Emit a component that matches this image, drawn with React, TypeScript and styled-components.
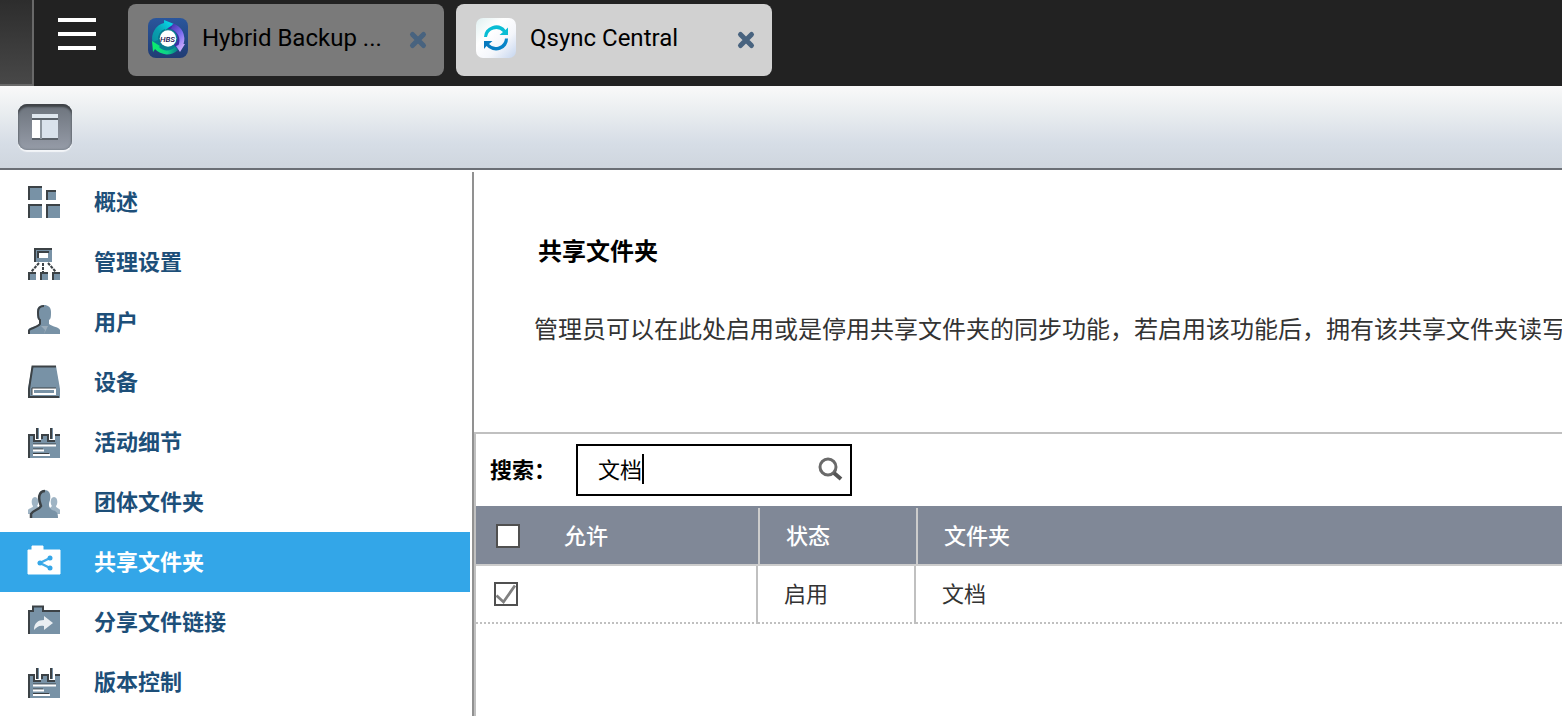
import React, { useState } from "react";
import styled, { createGlobalStyle } from "styled-components";

const GlobalStyle = createGlobalStyle`
  * { box-sizing: border-box; }
  html, body { margin: 0; padding: 0; background: #fff; }
  body, button, input {
    font-family: "Noto Sans CJK SC", "Noto Sans", sans-serif;
  }
`;

const Page = styled.div`
  display: flex;
  flex-direction: column;
  min-height: 100vh;
  overflow: hidden;
`;

const TopBar = styled.header`
  display: flex;
  height: 86px;
  background: #222;
`;

const Corner = styled.div`
  width: 34px;
  border-right: 2px solid #696969;
  border-bottom: 2px solid #696969;
  background: linear-gradient(#2d2d2d, #484848);
`;

const MenuButton = styled.button`
  display: flex;
  flex-direction: column;
  gap: 10px;
  width: 94px;
  padding: 18px 32px 0 24px;
  border: 0;
  background: none;
`;

const MenuLine = styled.span`
  height: 4px;
  background: #fff;
`;

const Tabs = styled.nav`
  display: flex;
  gap: 12px;
  padding: 4px 0 10px;
`;

const Tab = styled.div<{ $active?: boolean }>`
  display: flex;
  align-items: center;
  width: 316px;
  padding: 0 16px 4px 20px;
  border-radius: 8px;
  background: ${(p) => (p.$active ? "#d1d1d1" : "#7a7a7a")};
`;

const TabTitle = styled.a`
  flex: 1;
  margin-left: 14px;
  color: #000;
  font: 400 24px/32px Roboto, sans-serif;
  text-decoration: none;
  white-space: nowrap;
`;

const CloseButton = styled.button`
  display: flex;
  padding: 4px 0 0;
  border: 0;
  background: none;
`;

const Toolbar = styled.div`
  display: flex;
  align-items: flex-start;
  height: 84px;
  padding: 18px;
  border-bottom: 2px solid #6b6f75;
  background: linear-gradient(#f9f9f9 0%, #e8ecef 35%, #d6dde6 70%, #cfd6de 100%);
`;

const LayoutButton = styled.button`
  display: grid;
  place-items: center;
  width: 54px;
  height: 46px;
  padding: 0;
  border: 0;
  border-radius: 9px;
  background: linear-gradient(#6c737c, #969ca8);
  box-shadow: inset 0 3px 2px #3f4347, inset 0 0 2px 1px #7d858f, 0 2px 1px #f3f5f8;
`;

const Body = styled.div`
  display: flex;
  flex: 1;
  padding-top: 2px;
`;

const Sidebar = styled.nav`
  flex: 0 0 474px;
  padding-right: 2px;
  border-right: 2px solid #919191;
`;

const SideItem = styled.a<{ $active?: boolean }>`
  display: flex;
  align-items: center;
  gap: 32px;
  height: 60px;
  padding-left: 26px;
  background: ${(p) => (p.$active ? "#33a6e8" : "transparent")};
  color: ${(p) => (p.$active ? "#fff" : "#1d4f79")};
  font-size: 22px;
  font-weight: 700;
  line-height: 32px;
  text-decoration: none;
`;

const SideLabel = styled.span`
  padding-bottom: 4px;
`;

const Main = styled.main`
  display: flex;
  flex: 1;
  flex-direction: column;
  min-width: 0;
  overflow: hidden;
`;

const Intro = styled.section`
  padding: 62px 0 88px 60px;
`;

const Heading = styled.h1`
  margin: 0 0 46px 4px;
  color: #000;
  font-size: 24px;
  font-weight: 700;
  line-height: 32px;
`;

const Description = styled.p`
  margin: 0;
  color: #333;
  font-size: 24px;
  line-height: 32px;
  white-space: nowrap;
`;

const Panel = styled.section`
  flex: 1;
  border-top: 2px solid #c0c0c0;
  border-left: 2px solid #c0c0c0;
`;

const SearchRow = styled.div`
  display: flex;
  align-items: center;
  gap: 20px;
  height: 72px;
  padding-left: 14px;
`;

const SearchLabel = styled.label`
  padding-bottom: 4px;
  color: #000;
  font-size: 22px;
  font-weight: 700;
  line-height: 32px;
`;

const SearchBox = styled.div`
  position: relative;
  display: flex;
  align-items: center;
  width: 276px;
  height: 52px;
  padding: 0 6px 0 20px;
  border: 2px solid #000;
`;

const SearchInput = styled.input`
  flex: 1;
  min-width: 0;
  height: 40px;
  padding: 0 0 4px;
  border: 0;
  outline: 0;
  background: none;
  color: #000;
  font-size: 22px;
`;

const Caret = styled.span`
  position: absolute;
  top: 8px;
  left: 64px;
  width: 2px;
  height: 30px;
  background: #000;
`;

const SearchButton = styled.button`
  display: flex;
  padding: 0;
  border: 0;
  background: none;
`;

const Table = styled.table`
  width: 100%;
  border-top: 2px solid #808897;
  border-spacing: 0;
  table-layout: fixed;
`;

const HeadCell = styled.th<{ $width?: number }>`
  width: ${(p) => (p.$width ? `${p.$width}px` : "auto")};
  height: 58px;
  padding: 0 0 4px 26px;
  border-bottom: 2px solid #ccc;
  border-left: 2px solid #ccc;
  background: #808897;
  color: #fff;
  font-size: 22px;
  font-weight: 500;
  line-height: 32px;
  text-align: left;

  &:first-child {
    padding-left: 20px;
    border-left: 0;
  }
`;

const Cell = styled.td`
  height: 58px;
  padding: 0 0 4px 26px;
  border-right: 2px solid #c0c0c0;
  border-bottom: 2px dotted #c0c0c0;
  color: #333;
  font-size: 22px;
  line-height: 32px;

  &:first-child { padding-left: 18px; }
  &:last-child { border-right: 0; }
`;

const CheckLabel = styled.label`
  display: flex;
  align-items: center;
  gap: 44px;
`;

const CheckFrame = styled.span`
  display: grid;
  margin-top: 4px;
  width: 24px;
  height: 24px;

  > * { grid-area: 1 / 1; }
`;

const CheckInput = styled.input`
  width: 24px;
  height: 24px;
  margin: 0;
  border: 2px solid #505050;
  appearance: none;
  background: #fff;
`;

const CheckMark = styled.svg`
  pointer-events: none;
`;

function CheckBox(props: { label: string; checked: boolean; onChange: () => void; showLabel?: boolean }) {
  return (
    <CheckLabel>
      <CheckFrame>
        <CheckInput type="checkbox" aria-label={props.label} checked={props.checked} onChange={props.onChange} />
        {props.checked && (
          <CheckMark width="24" height="24" viewBox="0 0 24 24" fill="none">
            <path d="M2.500 13.500L9.500 20L21 3.500" stroke="#808080" strokeWidth="2.800" />
          </CheckMark>
        )}
      </CheckFrame>
      {props.showLabel && <span>{props.label}</span>}
    </CheckLabel>
  );
}

const HbsIcon = () => (
  <svg width="40" height="40" viewBox="0 0 40 40">
    <defs>
      <linearGradient id="hbsBg" x2="0" y2="1"><stop stopColor="#2a569c" /><stop offset="1" stopColor="#203c74" /></linearGradient>
      <linearGradient id="hbsLeft" x1="1" y1="0" x2="0" y2="1"><stop stopColor="#08e5f5" /><stop offset=".6" stopColor="#08a0b0" /><stop offset="1" stopColor="#0890a0" /></linearGradient>
      <linearGradient id="hbsRight" x2=".5" y2="1"><stop stopColor="#4330a8" /><stop offset=".55" stopColor="#7b6cf0" /><stop offset="1" stopColor="#c8a8ff" /></linearGradient>
      <linearGradient id="hbsBottom" x2="1"><stop stopColor="#0af06a" /><stop offset=".6" stopColor="#0fcf8b" /><stop offset="1" stopColor="#08798c" /></linearGradient>
    </defs>
    <rect width="40" height="40" rx="8" fill="url(#hbsBg)" />
    <circle cx="20" cy="20.5" r="11" fill="none" stroke="#087c91" strokeWidth="7" />
    <path d="M20.500 6A14.500 14.500 0 0 1 30 31L26 27A9 9 0 0 0 20 11Z" fill="#3d2ea6" />
    <path d="M4.500 24A16 16 0 0 1 16 5L16 2L26 6L17 12L17 11A10 10 0 0 0 10 22Z" fill="url(#hbsLeft)" />
    <path d="M25 5.500A16 16 0 0 1 35.500 26L37 26L32 34L28 28L30.500 27A12 12 0 0 0 23 11Z" fill="url(#hbsRight)" />
    <path d="M30 32A16 16 0 0 1 7 31L5 34L4 23L12 28L11 29A11 11 0 0 0 27 29Z" fill="url(#hbsBottom)" />
    <circle cx="20" cy="20.500" r="8.300" fill="#fff" />
    <text x="19.500" y="23.500" textAnchor="middle" fontFamily="Roboto, sans-serif" fontSize="8" fontWeight="500" fontStyle="italic" fill="#1c1550">HBS</text>
  </svg>
);

const QsyncIcon = () => (
  <svg width="40" height="40" viewBox="0 0 40 40">
    <defs>
      <linearGradient id="qsBg" x2="1" y2="1"><stop stopColor="#e0f0f1" /><stop offset=".35" stopColor="#fff" /><stop offset=".65" stopColor="#f4f6fb" /><stop offset="1" stopColor="#c5d5ee" /></linearGradient>
      <linearGradient id="qsArc" x2="1"><stop stopColor="#0678bd" /><stop offset="1" stopColor="#0786ca" /></linearGradient>
    </defs>
    <rect width="40" height="40" rx="7" fill="url(#qsBg)" />
    <path d="M8 19A12 11.500 0 0 1 29.500 12L32 9.500V17H23.500L27 14A9.300 9.300 0 0 0 11 19Z" fill="#09bdd4" />
    <path d="M32 20.500A12 11.500 0 0 1 10.500 28L8 31V23H16.500L13 26A9.300 9.300 0 0 0 29 20.500Z" fill="url(#qsArc)" />
  </svg>
);

const CloseIcon = () => (
  <svg width="20" height="20" viewBox="0 0 20 20" fill="none">
    <path d="M4.500 4.500L15.500 15.500M15.500 4.500L4.500 15.500" stroke="#48637f" strokeWidth="5" strokeLinecap="round" />
  </svg>
);

const LayoutIcon = () => (
  <svg width="28" height="28" viewBox="0 0 28 28">
    <path d="M1 5H27V7H1ZM1 25H27V27H1Z" fill="#5c636b" />
    <path d="M9 7H11V26H9Z" fill="#8b949d" />
    <path d="M1 1H27V5H1Z" fill="#dfe7ef" />
    <path d="M1 7H9V25H1Z" fill="#fff" />
    <path d="M11 7H27V25H11Z" fill="#d9e2ec" />
  </svg>
);

const SearchIcon = () => (
  <svg width="26" height="26" viewBox="0 0 26 26" fill="none">
    <circle cx="10" cy="10" r="8" stroke="#6a6a6a" strokeWidth="3" />
    <path d="M16 16L23 22" stroke="#555" strokeWidth="4" />
  </svg>
);

const FILL = "#7892a6";
const EDGE = "#3c4246";

const IconBase = (props: { children: React.ReactNode }) => (
  <svg width="36" height="36" viewBox="0 0 36 36" fill="none" aria-hidden="true">
    {props.children}
  </svg>
);

const Block = ({ x, y, w, h }: { x: number; y: number; w: number; h: number }) => (
  <>
    <rect x={x} y={y} width={w} height={h} fill={FILL} />
    <path d={`M${x + 1} ${y + h}V${y + 1}H${x + w}`} stroke={EDGE} strokeWidth="2" />
  </>
);

const OverviewIcon = () => (
  <IconBase>
    <Block x={2} y={2} w={14} h={14} />
    <Block x={20} y={6} w={10} h={10} />
    <Block x={2} y={20} w={14} h={14} />
    <Block x={20} y={20} w={14} h={14} />
  </IconBase>
);

const SettingsIcon = () => (
  <IconBase>
    <path d="M10 6H24V16H10Z" stroke={FILL} strokeWidth="4" />
    <path d="M9 18V5H26M12 14V8H23" stroke={EDGE} strokeWidth="2" />
    <path d="M13 19L5 28M17 19V28M22 19L30 28" stroke={EDGE} strokeWidth="2" strokeDasharray="3 1" />
    <Block x={2} y={28} w={8} h={8} />
    <Block x={14} y={28} w={8} h={8} />
    <Block x={26} y={28} w={8} h={8} />
  </IconBase>
);

const UserIcon = () => (
  <IconBase>
    <path d="M2 30V26C3 23 10 23 13 20V16C11 15 11 12 11 8C11 3 14 1 18 1C22 1 25 3 25 8C25 12 25 15 23 16V20C27 23 33 23 34 26V30Z" fill={FILL} />
    <path d="M3 30V26.500C4 24 11 24 14 20V16C12 15 12 12 12 8C12 4 14 2 18 2" stroke={EDGE} strokeWidth="2" />
    <path d="M15 22L19 26L18 30L22 22" fill="#aab8c3" opacity=".7" />
  </IconBase>
);

const DeviceIcon = () => (
  <IconBase>
    <path d="M6 2H30L34 25V34H2V25Z" fill={FILL} />
    <path d="M30 2.500H6.500L3 25V33H33" stroke={EDGE} strokeWidth="2" />
    <path d="M7 25H29V30H7Z" fill={FILL} stroke="#fff" strokeWidth="2" />
    <path d="M6 31V24H30" stroke={EDGE} strokeWidth="1" />
  </IconBase>
);

const CalendarIcon = () => (
  <IconBase>
    <path d="M2 10H34V34H2Z" fill={FILL} />
    <path d="M8 8H15V16H8ZM22 8H29V16H22Z" fill="#fff" />
    <path d="M3 34V11H8V17H15M16 15V11H22V17H29M29 11H34" stroke={EDGE} strokeWidth="2" />
    <path d="M11 4V15M25 4V15" stroke={EDGE} strokeWidth="2" />
    <path d="M12.500 4V15M26.500 4V15" stroke={FILL} strokeWidth="1" />
    <path d="M7 20H30M7 25H17M7 29.500H23" stroke={EDGE} strokeWidth="1" />
    <path d="M7 21.500H30M7 26.500H18M7 31H24" stroke="#fff" strokeWidth="2" />
  </IconBase>
);

const GroupIcon = () => (
  <IconBase>
    <path d="M2 30V26C3 24 7 24 7 22C5 20 5 13 9 13C13 13 13 20 11 22L15 25H23L26 22C24 20 24 13 28 13C32 13 32 20 30 22C30 24 33 24 34 26V30Z" fill="#9fb4c4" />
    <path d="M4 34V30C6 26 12 26 14 22C12 17 12 13 13 10C14 7 16 6 18.500 6C24 6 25 11 24 16C22 21 23 24 26 26C30 27 32 28 32 34Z" fill={FILL} />
    <path d="M5 34V30C7 26 13 26 15 22C13 17 13 12 14 10C15 8 17 7 19 7" stroke={EDGE} strokeWidth="2.500" />
  </IconBase>
);

const SharedFolderIcon = () => (
  <IconBase>
    <path d="M2 6H6V2H17V6H34V30H2Z" fill="#fff" stroke="#fff" strokeLinejoin="round" />
    <path d="M24 14L14 19L24 24" stroke="#43ade9" strokeWidth="2.500" />
    <circle cx="24" cy="14" r="2.500" fill="#35a7e8" />
    <circle cx="14" cy="19" r="2.500" fill="#35a7e8" />
    <circle cx="24" cy="24" r="2.500" fill="#35a7e8" />
  </IconBase>
);

const ShareLinkIcon = () => (
  <IconBase>
    <path d="M2 6H6V2H17V6H34V30H2Z" fill={FILL} />
    <path d="M3 30V7H7V2.500H17V7H34" stroke={EDGE} strokeWidth="2" />
    <path d="M8 26C8 19 12 16 18 16V12L27 19L18 26V22C13 21 11 23 8 26Z" fill="#e9eef2" />
  </IconBase>
);

const ITEMS = [
  { label: "概述", icon: <OverviewIcon /> },
  { label: "管理设置", icon: <SettingsIcon /> },
  { label: "用户", icon: <UserIcon /> },
  { label: "设备", icon: <DeviceIcon /> },
  { label: "活动细节", icon: <CalendarIcon /> },
  { label: "团体文件夹", icon: <GroupIcon /> },
  { label: "共享文件夹", icon: <SharedFolderIcon />, active: true },
  { label: "分享文件链接", icon: <ShareLinkIcon /> },
  { label: "版本控制", icon: <CalendarIcon /> },
];

export default function App() {
  const [query, setQuery] = useState("文档");
  const [all, setAll] = useState(false);
  const [docs, setDocs] = useState(true);

  return (
    <Page>
      <GlobalStyle />
      <TopBar>
        <Corner />
        <MenuButton aria-label="菜单">
          <MenuLine />
          <MenuLine />
          <MenuLine />
        </MenuButton>
        <Tabs>
          <Tab>
            <HbsIcon />
            <TabTitle href="#hbs">Hybrid Backup ...</TabTitle>
            <CloseButton aria-label="关闭"><CloseIcon /></CloseButton>
          </Tab>
          <Tab $active>
            <QsyncIcon />
            <TabTitle href="#qsync">Qsync Central</TabTitle>
            <CloseButton aria-label="关闭"><CloseIcon /></CloseButton>
          </Tab>
        </Tabs>
      </TopBar>
      <Toolbar>
        <LayoutButton aria-label="侧边栏"><LayoutIcon /></LayoutButton>
      </Toolbar>
      <Body>
        <Sidebar>
          {ITEMS.map((item) => (
            <SideItem key={item.label} href="#" $active={item.active}>
              {item.icon}
              <SideLabel>{item.label}</SideLabel>
            </SideItem>
          ))}
        </Sidebar>
        <Main>
          <Intro>
            <Heading>共享文件夹</Heading>
            <Description>管理员可以在此处启用或是停用共享文件夹的同步功能，若启用该功能后，拥有该共享文件夹读写</Description>
          </Intro>
          <Panel>
            <SearchRow>
              <SearchLabel htmlFor="search">搜索：</SearchLabel>
              <SearchBox>
                <SearchInput id="search" value={query} onChange={(e) => setQuery(e.target.value)} />
                <Caret />
                <SearchButton aria-label="搜索"><SearchIcon /></SearchButton>
              </SearchBox>
            </SearchRow>
            <Table>
              <thead>
                <tr>
                  <HeadCell $width={282}>
                    <CheckBox label="允许" showLabel checked={all} onChange={() => setAll(!all)} />
                  </HeadCell>
                  <HeadCell $width={158}>状态</HeadCell>
                  <HeadCell>文件夹</HeadCell>
                </tr>
              </thead>
              <tbody>
                <tr>
                  <Cell><CheckBox label="允许" checked={docs} onChange={() => setDocs(!docs)} /></Cell>
                  <Cell>启用</Cell>
                  <Cell>文档</Cell>
                </tr>
              </tbody>
            </Table>
          </Panel>
        </Main>
      </Body>
    </Page>
  );
}
